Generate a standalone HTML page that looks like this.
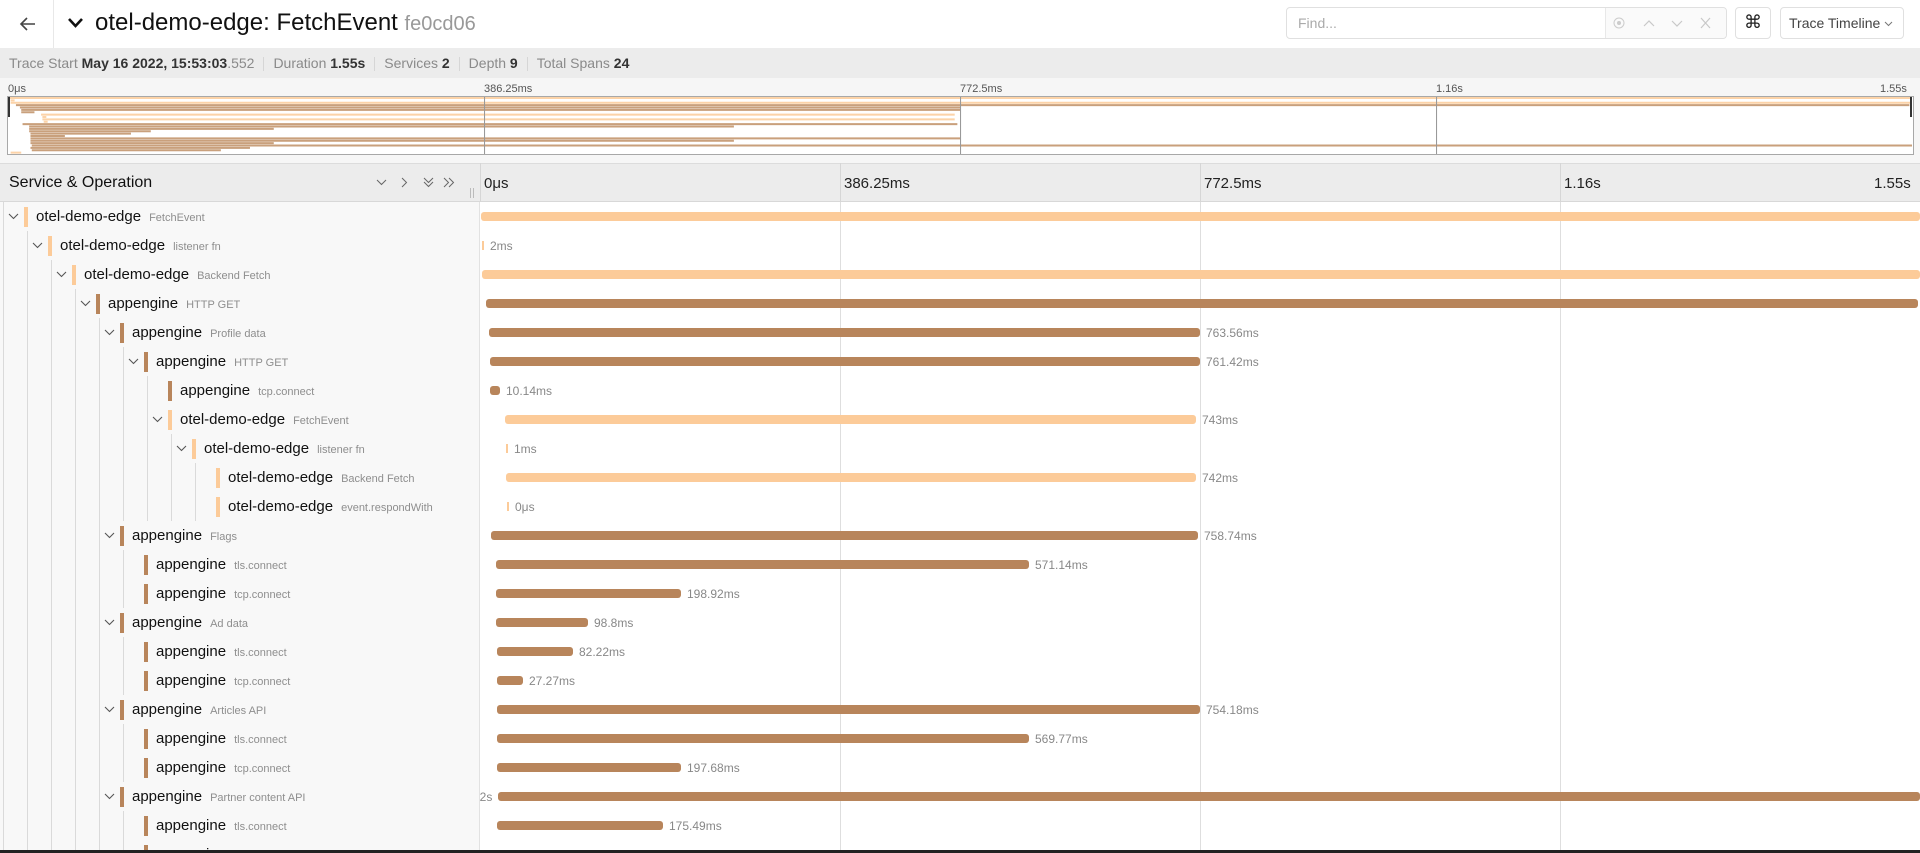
<!DOCTYPE html>
<html><head><meta charset="utf-8">
<style>
*{box-sizing:border-box;margin:0;padding:0}
html{width:1920px;height:853px;overflow:hidden}
body{width:1920px;height:853px;overflow:hidden;background:#fff;font-family:"Liberation Sans",Arial,sans-serif;position:relative;color:#000}
.a{position:absolute}
.hdr{left:0;top:0;width:1920px;height:48px;background:#fff}
.sub{left:0;top:48px;width:1920px;height:30px;background:#ececec;font-size:14px;color:#8a8a8a;line-height:30px;padding-left:9px;white-space:nowrap}
.sub b{color:#333;font-weight:bold}
.sub .sep{display:inline-block;width:1px;height:14px;background:#d6d6d6;vertical-align:middle;margin:0 9px}
.mini{left:0;top:78px;width:1920px;height:85px;background:#f6f6f6}
.ml{font-size:11px;color:#555;top:83px}
.colh{left:0;top:163px;width:1920px;height:39px;background:#ececec;border-top:1px solid #dcdcdc;border-bottom:1px solid #d8d8d8}
.left{left:0;top:202px;width:480px;height:648px;background:#f8f8f8;border-right:1px solid #e2e2e2;overflow:hidden}
.tl{left:480px;top:202px;width:1440px;height:648px;overflow:hidden;background:#fff}
.row{position:absolute;left:0;height:29px;width:480px}
.chev{position:absolute;top:9px;width:11px;height:11px}
.sb{position:absolute;top:5px;width:4px;height:20px}
.nm{position:absolute;top:6px;font-size:15px;white-space:nowrap;color:#111}
.nm i{font-style:normal;font-size:11px;color:#8e8e8e;margin-left:8px}
.gl{position:absolute;width:1px;background:#dadada}
.bar{position:absolute;height:9px;border-radius:3px}
.L{background:#fccb99}.D{background:#b8855b}
.lab{position:absolute;font-size:12px;color:#888;white-space:nowrap}
.grid{position:absolute;top:0;width:1px;height:651px;background:#dedede}
</style></head><body>

<div class="a hdr"></div>
<div class="a" style="left:0;top:0;width:54px;height:48px;border-right:1px solid #e8e8e8"></div>
<svg class="a" style="left:19px;top:15px" width="18" height="18" viewBox="0 0 18 18"><path d="M16 9H2M8 3L2 9l6 6" fill="none" stroke="#444" stroke-width="1.6"/></svg>
<svg class="a" style="left:67px;top:17px" width="17" height="12" viewBox="0 0 17 12"><path d="M2 2l6.5 7L15 2" fill="none" stroke="#111" stroke-width="2.6"/></svg>
<div class="a" style="left:95px;top:9px;font-size:24px;color:#111;white-space:nowrap">otel-demo-edge: FetchEvent <span style="color:#999;font-size:20px">fe0cd06</span></div>

<div class="a" style="left:1286px;top:7px;width:441px;height:32px;border:1px solid #e0e0e0;border-radius:4px;background:#fff"></div>
<div class="a" style="left:1605px;top:8px;width:121px;height:30px;background:#fafafa;border-left:1px solid #e8e8e8;border-radius:0 4px 4px 0"></div>
<div class="a" style="left:1298px;top:15px;font-size:14px;color:#aaa">Find...</div>
<svg class="a" style="left:1612px;top:15px" width="110" height="16" viewBox="0 0 110 16"><circle cx="7" cy="8" r="5" fill="none" stroke="#ccc"/><circle cx="7" cy="8" r="2" fill="#ccc"/><path d="M32 11l5-5 5 5M60 6l5 5 5-5M89 3l9 10M98 3l-9 10" fill="none" stroke="#c8c8c8" stroke-width="1.2"/></svg>
<div class="a" style="left:1735px;top:7px;width:36px;height:32px;border:1px solid #e0e0e0;border-radius:4px;text-align:center;font-size:18px;line-height:30px;color:#222;font-family:'DejaVu Sans',sans-serif">⌘</div>
<div class="a" style="left:1780px;top:7px;width:124px;height:32px;border:1px solid #e0e0e0;border-radius:4px;font-size:14px;line-height:30px;padding-left:8px;color:#444;white-space:nowrap">Trace Timeline <svg width="9" height="6" viewBox="0 0 9 6" style="vertical-align:middle"><path d="M1 1l3.5 3.5L8 1" fill="none" stroke="#777"/></svg></div>

<div class="a sub">Trace Start <b>May 16 2022, 15:53:03</b>.552<span class="sep"></span>Duration <b>1.55s</b><span class="sep"></span>Services <b>2</b><span class="sep"></span>Depth <b>9</b><span class="sep"></span>Total Spans <b>24</b></div>

<div class="a mini"></div>
<div class="a ml" style="left:8px">0μs</div>
<div class="a ml" style="left:484px">386.25ms</div>
<div class="a ml" style="left:960px">772.5ms</div>
<div class="a ml" style="left:1436px">1.16s</div>
<div class="a ml" style="left:1880px">1.55s</div>
<div class="a" style="left:7px;top:96px;width:1907px;height:59px;border:1px solid #a8a8a8;background:#fff"></div>
<svg class="a" style="left:8px;top:97px" width="1904" height="57" viewBox="480 0 1440 24" preserveAspectRatio="none">
<g fill="#fcd3a8"><rect x="481" y="0" width="1439" height="0.85"/><rect x="482" y="1" width="3" height="0.85"/><rect x="482" y="2" width="1438" height="0.85"/><rect x="505" y="7" width="691" height="0.85"/><rect x="506" y="8" width="3" height="0.85"/><rect x="506" y="9" width="690" height="0.85"/><rect x="507" y="10" width="3" height="0.85"/><rect x="482" y="23" width="8" height="0.85"/></g>
<g fill="#c9a07c"><rect x="486" y="3" width="1432" height="0.85"/><rect x="489" y="4" width="711" height="0.85"/><rect x="490" y="5" width="710" height="0.85"/><rect x="490" y="6" width="10" height="0.85"/><rect x="491" y="11" width="707" height="0.85"/><rect x="496" y="12" width="533" height="0.85"/><rect x="496" y="13" width="185" height="0.85"/><rect x="496" y="14" width="92" height="0.85"/><rect x="497" y="15" width="76" height="0.85"/><rect x="497" y="16" width="26" height="0.85"/><rect x="497" y="17" width="703" height="0.85"/><rect x="497" y="18" width="532" height="0.85"/><rect x="497" y="19" width="184" height="0.85"/><rect x="498" y="20" width="1422" height="0.85"/><rect x="497" y="21" width="166" height="0.85"/><rect x="498" y="22" width="143" height="0.85"/></g>
<g fill="#999"><rect x="840" y="0" width="0.8" height="24"/><rect x="1200" y="0" width="0.8" height="24"/><rect x="1560" y="0" width="0.8" height="24"/></g>
</svg>
<div class="a" style="left:8px;top:97px;width:2px;height:20px;background:#333"></div>
<div class="a" style="left:1910px;top:97px;width:2px;height:20px;background:#333"></div>

<div class="a colh"></div>
<div class="a" style="left:9px;top:174px;font-size:16px;color:#111">Service &amp; Operation</div>
<svg class="a" style="left:376px;top:176px" width="82" height="14" viewBox="0 0 82 14"><path d="M1 4l4.5 4.5L10 4M26 2l4.5 4.5L26 11M48 2l4.5 4.5L57 2M48 6l4.5 4.5L57 6M68 2l4.5 4.5L68 11M73 2l4.5 4.5L73 11" fill="none" stroke="#666" stroke-width="1"/></svg>
<div class="a" style="left:470px;top:188px;width:1px;height:10px;background:#bbb"></div><div class="a" style="left:473px;top:188px;width:1px;height:10px;background:#bbb"></div>
<div class="a" style="left:480px;top:163px;width:1px;height:39px;background:#d6d6d6"></div>
<div class="a" style="left:840px;top:163px;width:1px;height:39px;background:#d6d6d6"></div>
<div class="a" style="left:1200px;top:163px;width:1px;height:39px;background:#d6d6d6"></div>
<div class="a" style="left:1560px;top:163px;width:1px;height:39px;background:#d6d6d6"></div>
<div class="a" style="left:484px;top:175px;font-size:15px;color:#222">0μs</div>
<div class="a" style="left:844px;top:175px;font-size:15px;color:#222">386.25ms</div>
<div class="a" style="left:1204px;top:175px;font-size:15px;color:#222">772.5ms</div>
<div class="a" style="left:1564px;top:175px;font-size:15px;color:#222">1.16s</div>
<div class="a" style="left:1874px;top:175px;font-size:15px;color:#222">1.55s</div>

<div class="a left">
<div class="gl" style="left:3px;top:0;height:651px"></div>
<div class="gl" style="left:27px;top:29px;height:622px"></div>
<div class="gl" style="left:51px;top:58px;height:593px"></div>
<div class="gl" style="left:75px;top:87px;height:564px"></div>
<div class="gl" style="left:99px;top:116px;height:535px"></div>
<div class="gl" style="left:123px;top:145px;height:174px"></div>
<div class="gl" style="left:147px;top:174px;height:145px"></div>
<div class="gl" style="left:171px;top:232px;height:87px"></div>
<div class="gl" style="left:195px;top:261px;height:58px"></div>
<div class="gl" style="left:123px;top:348px;height:58px"></div>
<div class="gl" style="left:123px;top:435px;height:58px"></div>
<div class="gl" style="left:123px;top:522px;height:58px"></div>
<div class="gl" style="left:123px;top:609px;height:42px"></div>

<svg width="0" height="0" style="position:absolute"><defs><path id="cv" d="M1 3l4.5 4.5L10 3" fill="none" stroke="#555" stroke-width="1.1"/></defs></svg>

<div class="row" style="top:0"><svg class="chev" style="left:8px"><use href="#cv"/></svg><div class="sb" style="left:24px;background:#fccb99"></div><div class="nm" style="left:36px">otel-demo-edge<i>FetchEvent</i></div></div>
<div class="row" style="top:29px"><svg class="chev" style="left:32px"><use href="#cv"/></svg><div class="sb" style="left:48px;background:#fccb99"></div><div class="nm" style="left:60px">otel-demo-edge<i>listener fn</i></div></div>
<div class="row" style="top:58px"><svg class="chev" style="left:56px"><use href="#cv"/></svg><div class="sb" style="left:72px;background:#fccb99"></div><div class="nm" style="left:84px">otel-demo-edge<i>Backend Fetch</i></div></div>
<div class="row" style="top:87px"><svg class="chev" style="left:80px"><use href="#cv"/></svg><div class="sb" style="left:96px;background:#b8855b"></div><div class="nm" style="left:108px">appengine<i>HTTP GET</i></div></div>
<div class="row" style="top:116px"><svg class="chev" style="left:104px"><use href="#cv"/></svg><div class="sb" style="left:120px;background:#b8855b"></div><div class="nm" style="left:132px">appengine<i>Profile data</i></div></div>
<div class="row" style="top:145px"><svg class="chev" style="left:128px"><use href="#cv"/></svg><div class="sb" style="left:144px;background:#b8855b"></div><div class="nm" style="left:156px">appengine<i>HTTP GET</i></div></div>
<div class="row" style="top:174px"><div class="sb" style="left:168px;background:#b8855b"></div><div class="nm" style="left:180px">appengine<i>tcp.connect</i></div></div>
<div class="row" style="top:203px"><svg class="chev" style="left:152px"><use href="#cv"/></svg><div class="sb" style="left:168px;background:#fccb99"></div><div class="nm" style="left:180px">otel-demo-edge<i>FetchEvent</i></div></div>
<div class="row" style="top:232px"><svg class="chev" style="left:176px"><use href="#cv"/></svg><div class="sb" style="left:192px;background:#fccb99"></div><div class="nm" style="left:204px">otel-demo-edge<i>listener fn</i></div></div>
<div class="row" style="top:261px"><div class="sb" style="left:216px;background:#fccb99"></div><div class="nm" style="left:228px">otel-demo-edge<i>Backend Fetch</i></div></div>
<div class="row" style="top:290px"><div class="sb" style="left:216px;background:#fccb99"></div><div class="nm" style="left:228px">otel-demo-edge<i>event.respondWith</i></div></div>
<div class="row" style="top:319px"><svg class="chev" style="left:104px"><use href="#cv"/></svg><div class="sb" style="left:120px;background:#b8855b"></div><div class="nm" style="left:132px">appengine<i>Flags</i></div></div>
<div class="row" style="top:348px"><div class="sb" style="left:144px;background:#b8855b"></div><div class="nm" style="left:156px">appengine<i>tls.connect</i></div></div>
<div class="row" style="top:377px"><div class="sb" style="left:144px;background:#b8855b"></div><div class="nm" style="left:156px">appengine<i>tcp.connect</i></div></div>
<div class="row" style="top:406px"><svg class="chev" style="left:104px"><use href="#cv"/></svg><div class="sb" style="left:120px;background:#b8855b"></div><div class="nm" style="left:132px">appengine<i>Ad data</i></div></div>
<div class="row" style="top:435px"><div class="sb" style="left:144px;background:#b8855b"></div><div class="nm" style="left:156px">appengine<i>tls.connect</i></div></div>
<div class="row" style="top:464px"><div class="sb" style="left:144px;background:#b8855b"></div><div class="nm" style="left:156px">appengine<i>tcp.connect</i></div></div>
<div class="row" style="top:493px"><svg class="chev" style="left:104px"><use href="#cv"/></svg><div class="sb" style="left:120px;background:#b8855b"></div><div class="nm" style="left:132px">appengine<i>Articles API</i></div></div>
<div class="row" style="top:522px"><div class="sb" style="left:144px;background:#b8855b"></div><div class="nm" style="left:156px">appengine<i>tls.connect</i></div></div>
<div class="row" style="top:551px"><div class="sb" style="left:144px;background:#b8855b"></div><div class="nm" style="left:156px">appengine<i>tcp.connect</i></div></div>
<div class="row" style="top:580px"><svg class="chev" style="left:104px"><use href="#cv"/></svg><div class="sb" style="left:120px;background:#b8855b"></div><div class="nm" style="left:132px">appengine<i>Partner content API</i></div></div>
<div class="row" style="top:609px"><div class="sb" style="left:144px;background:#b8855b"></div><div class="nm" style="left:156px">appengine<i>tls.connect</i></div></div>
<div class="row" style="top:638px"><div class="sb" style="left:144px;background:#b8855b"></div><div class="nm" style="left:156px">appengine<i>tcp.connect</i></div></div>
</div>

<div class="a tl">
<div class="grid" style="left:360px"></div><div class="grid" style="left:720px"></div><div class="grid" style="left:1080px"></div>
<div class="bar L" style="left:1px;top:10px;width:1439px"></div>
<div class="bar L" style="left:2px;top:39px;width:2px;border-radius:0"></div><div class="lab" style="left:10px;top:37px">2ms</div>
<div class="bar L" style="left:2px;top:68px;width:1438px"></div>
<div class="bar D" style="left:6px;top:97px;width:1432px"></div>
<div class="bar D" style="left:9px;top:126px;width:711px"></div><div class="lab" style="left:726px;top:124px">763.56ms</div>
<div class="bar D" style="left:10px;top:155px;width:710px"></div><div class="lab" style="left:726px;top:153px">761.42ms</div>
<div class="bar D" style="left:10px;top:184px;width:10px"></div><div class="lab" style="left:26px;top:182px">10.14ms</div>
<div class="bar L" style="left:25px;top:213px;width:691px"></div><div class="lab" style="left:722px;top:211px">743ms</div>
<div class="bar L" style="left:26px;top:242px;width:2px;border-radius:0"></div><div class="lab" style="left:34px;top:240px">1ms</div>
<div class="bar L" style="left:26px;top:271px;width:690px"></div><div class="lab" style="left:722px;top:269px">742ms</div>
<div class="bar L" style="left:27px;top:300px;width:2px;border-radius:0"></div><div class="lab" style="left:35px;top:298px">0μs</div>
<div class="bar D" style="left:11px;top:329px;width:707px"></div><div class="lab" style="left:724px;top:327px">758.74ms</div>
<div class="bar D" style="left:16px;top:358px;width:533px"></div><div class="lab" style="left:555px;top:356px">571.14ms</div>
<div class="bar D" style="left:16px;top:387px;width:185px"></div><div class="lab" style="left:207px;top:385px">198.92ms</div>
<div class="bar D" style="left:16px;top:416px;width:92px"></div><div class="lab" style="left:114px;top:414px">98.8ms</div>
<div class="bar D" style="left:17px;top:445px;width:76px"></div><div class="lab" style="left:99px;top:443px">82.22ms</div>
<div class="bar D" style="left:17px;top:474px;width:26px"></div><div class="lab" style="left:49px;top:472px">27.27ms</div>
<div class="bar D" style="left:17px;top:503px;width:703px"></div><div class="lab" style="left:726px;top:501px">754.18ms</div>
<div class="bar D" style="left:17px;top:532px;width:532px"></div><div class="lab" style="left:555px;top:530px">569.77ms</div>
<div class="bar D" style="left:17px;top:561px;width:184px"></div><div class="lab" style="left:207px;top:559px">197.68ms</div>
<div class="bar D" style="left:18px;top:590px;width:1422px"></div><div class="lab" style="left:-17px;top:588px">1.52s</div>
<div class="bar D" style="left:17px;top:619px;width:166px"></div><div class="lab" style="left:189px;top:617px">175.49ms</div>
<div class="bar D" style="left:18px;top:648px;width:143px"></div><div class="lab" style="left:167px;top:646px">150.24ms</div>
</div>

<div class="a" style="left:0;top:850px;width:1920px;height:3px;background:#222"></div>
</body></html>
